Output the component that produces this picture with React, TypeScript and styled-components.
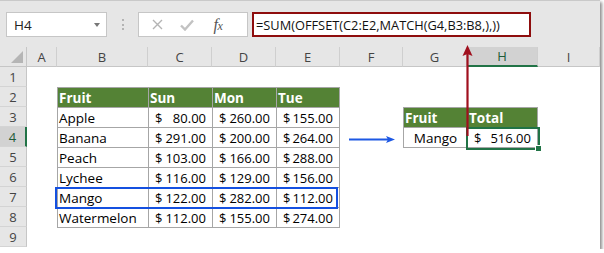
import React from 'react';
import styled, { createGlobalStyle, css } from 'styled-components';

const GlobalStyle = createGlobalStyle`
  body {
    margin: 0;
    background: #fff;
  }
`;

const UI_FONT = `'Open Sans', 'Liberation Sans', sans-serif`;
const CELL_FONT = `'Open Sans', 'Liberation Sans', sans-serif`;
const EXCEL_GREEN = '#217346';
const GRID_LINE = '#a6a6a6';

const COLUMNS = ['A', 'B', 'C', 'D', 'E', 'F', 'G', 'H', 'I'];
const ROWS = [1, 2, 3, 4, 5, 6, 7, 8, 9];
const ACTIVE_COLUMN = 'H';
const ACTIVE_ROW = 4;

type CellKind = 'head' | 'text' | 'centered' | 'money';
type CellSpec = { kind: CellKind; value: string | number };

type Range = { from: string; to: string; top: number; bottom: number };

const fruitSales: [string, number, number, number][] = [
  ['Apple', 80, 260, 155],
  ['Banana', 291, 200, 264],
  ['Peach', 103, 166, 288],
  ['Lychee', 116, 129, 156],
  ['Mango', 122, 282, 112],
  ['Watermelon', 112, 155, 274],
];

const cells: Record<string, CellSpec> = {
  B2: { kind: 'head', value: 'Fruit' },
  C2: { kind: 'head', value: 'Sun' },
  D2: { kind: 'head', value: 'Mon' },
  E2: { kind: 'head', value: 'Tue' },
  G3: { kind: 'head', value: 'Fruit' },
  H3: { kind: 'head', value: 'Total' },
  G4: { kind: 'centered', value: 'Mango' },
  H4: { kind: 'money', value: 516 },
};
fruitSales.forEach(([fruit, sun, mon, tue], i) => {
  const row = i + 3;
  cells[`B${row}`] = { kind: 'text', value: fruit };
  cells[`C${row}`] = { kind: 'money', value: sun };
  cells[`D${row}`] = { kind: 'money', value: mon };
  cells[`E${row}`] = { kind: 'money', value: tue };
});

const tables: Range[] = [
  { from: 'B', to: 'E', top: 2, bottom: 8 },
  { from: 'G', to: 'H', top: 3, bottom: 4 },
];

const findTable = (col: string, row: number) =>
  tables.find(
    (t) =>
      col >= t.from && col <= t.to && row >= t.top && row <= t.bottom,
  );

const Frame = styled.div`
  position: relative;
  width: 600px;
  height: 249px;
  overflow: hidden;
  background: #e6e6e6;
  border-top: 1px solid #c9c9c9;
  box-sizing: border-box;
  box-shadow: 2px 2px 3px rgba(0, 0, 0, 0.45);
`;

const Toolbar = styled.div`
  display: flex;
  align-items: flex-start;
  height: 46px;
  box-sizing: border-box;
  padding: 11px 0 0 6px;
  font-family: ${UI_FONT};
`;

const NameBox = styled.div`
  display: flex;
  align-items: center;
  justify-content: space-between;
  width: 101px;
  height: 25px;
  box-sizing: border-box;
  padding: 0 6px 0 7px;
  background: #fff;
  border: 1px solid #c6c6c6;
  font-size: 13.5px;
  color: #222;
`;

const DropCaret = styled.span`
  width: 0;
  height: 0;
  border-left: 3.5px solid transparent;
  border-right: 3.5px solid transparent;
  border-top: 4px solid #777;
`;

const Grip = styled.div`
  display: flex;
  flex-direction: column;
  align-items: center;
  justify-content: center;
  gap: 2.5px;
  width: 31px;
  height: 25px;

  span {
    width: 2px;
    height: 2px;
    background: #b3b3b3;
  }
`;

const FormulaButtons = styled.div`
  display: flex;
  align-items: center;
  width: 110px;
  height: 25px;
  box-sizing: border-box;
  padding: 0 0 0 13px;
  background: #fff;
  border: 1px solid #c6c6c6;
`;

const BarIcon = styled.span<{ $width: number }>`
  display: inline-flex;
  align-items: center;
  justify-content: center;
  width: ${({ $width }) => $width}px;
`;

const FxLabel = styled.span`
  font-family: 'Liberation Serif', serif;
  font-style: italic;
  font-size: 16px;
  color: #555;
  letter-spacing: -0.5px;

  small {
    font-size: 12px;
  }
`;

const FormulaInput = styled.div`
  display: flex;
  align-items: center;
  margin-left: 4px;
  width: 279px;
  height: 25px;
  box-sizing: border-box;
  padding-left: 2px;
  background: #fff;
  border: 2.5px solid #8e0d0d;
  font-size: 12.8px;
  color: #111;
  white-space: nowrap;
`;

const Sheet = styled.div`
  display: grid;
  grid-template-columns: 27px 30px 91px 64px 64px 64px 63px 64px 71px 62px;
  grid-auto-rows: 20px;
  padding-bottom: 2px;
  background: #fff;
`;

const headerBase = css`
  display: flex;
  align-items: center;
  justify-content: center;
  box-sizing: border-box;
  background: #e6e6e6;
  font-family: ${UI_FONT};
  font-size: 13px;
  color: #444;
`;

const Corner = styled.div`
  ${headerBase};
  position: relative;
  border-right: 1px solid #c6c6c6;
  border-bottom: 1px solid #c6c6c6;

  &::after {
    content: '';
    position: absolute;
    right: 3px;
    bottom: 3px;
    border-left: 12px solid transparent;
    border-bottom: 12px solid #b5b5b5;
  }
`;

const ColumnHeader = styled.div<{ $active: boolean }>`
  ${headerBase};
  border-right: 1px solid #cfcfcf;
  border-bottom: 1px solid #c6c6c6;
  ${({ $active }) =>
    $active &&
    css`
      background: #d2d2d2;
      color: #1d5c38;
      border-bottom: 2px solid ${EXCEL_GREEN};
    `}
`;

const RowHeader = styled.div<{ $active: boolean }>`
  ${headerBase};
  border-right: 1px solid #c6c6c6;
  border-bottom: 1px solid #d4d4d4;
  ${({ $active }) =>
    $active &&
    css`
      background: #d2d2d2;
      color: #1d5c38;
      border-right: 2px solid ${EXCEL_GREEN};
    `}
`;

const Cell = styled.div<{
  $kind?: CellKind;
  $boxed: boolean;
  $lastCol?: boolean;
  $lastRow?: boolean;
}>`
  display: flex;
  align-items: center;
  box-sizing: border-box;
  min-width: 0;
  font-family: ${CELL_FONT};
  font-size: 13.5px;
  color: #000;
  white-space: nowrap;
  padding: 0 1px;

  ${({ $boxed, $lastCol, $lastRow }) =>
    $boxed &&
    css`
      border-left: 1px solid ${GRID_LINE};
      border-top: 1px solid ${GRID_LINE};
      ${$lastCol && `border-right: 1px solid ${GRID_LINE};`}
      ${$lastRow && `box-shadow: 0 1px 0 ${GRID_LINE};`}
    `}

  ${({ $kind }) => {
    switch ($kind) {
      case 'head':
        return css`
          background: #548235;
          color: #fff;
          font-weight: 700;
        `;
      case 'centered':
        return css`
          justify-content: center;
        `;
      case 'money':
        return css`
          justify-content: space-between;
          padding: 0 6px;
          font-size: 13px;
        `;
      default:
        return '';
    }
  }}
`;

const SelectionBox = styled.div<{ $color: string }>`
  position: absolute;
  box-sizing: border-box;
  border: 2px solid ${({ $color }) => $color};
  pointer-events: none;
`;

const FillHandle = styled.span`
  position: absolute;
  right: -4px;
  bottom: -4px;
  width: 5px;
  height: 5px;
  background: ${EXCEL_GREEN};
  border: 1px solid #fff;
`;

const Arrow = styled.svg`
  position: absolute;
  overflow: visible;
`;

const SheetCell: React.FC<{ col: string; row: number }> = ({ col, row }) => {
  const spec = cells[`${col}${row}`];
  const table = findTable(col, row);
  return (
    <Cell
      $kind={spec?.kind}
      $boxed={!!table}
      $lastCol={table?.to === col}
      $lastRow={table?.bottom === row}
    >
      {spec?.kind === 'money' ? (
        <>
          <span>$</span>
          <span>{Number(spec.value).toFixed(2)}</span>
        </>
      ) : (
        spec?.value
      )}
    </Cell>
  );
};

const App: React.FC = () => (
  <>
    <GlobalStyle />
    <Frame>
      <Toolbar>
        <NameBox>
          <span>H4</span>
          <DropCaret />
        </NameBox>
        <Grip>
          <span />
          <span />
          <span />
        </Grip>
        <FormulaButtons>
          <BarIcon $width={11}>
            <svg width="11" height="11" viewBox="0 0 11 11">
              <path d="M1 1 L10 10 M10 1 L1 10" stroke="#b4b4b4" strokeWidth="1.4" />
            </svg>
          </BarIcon>
          <BarIcon $width={48}>
            <svg width="14" height="12" viewBox="0 0 14 12">
              <path d="M1 6.5 L5 10.5 L13 1.5" stroke="#c2c2c2" strokeWidth="2.4" fill="none" />
            </svg>
          </BarIcon>
          <BarIcon $width={14}>
            <FxLabel>
              f<small>x</small>
            </FxLabel>
          </BarIcon>
        </FormulaButtons>
        <FormulaInput>=SUM(OFFSET(C2:E2,MATCH(G4,B3:B8,),))</FormulaInput>
      </Toolbar>

      <Sheet>
        <Corner />
        {COLUMNS.map((col) => (
          <ColumnHeader key={col} $active={col === ACTIVE_COLUMN}>
            {col}
          </ColumnHeader>
        ))}
        {ROWS.map((row) => (
          <React.Fragment key={row}>
            <RowHeader $active={row === ACTIVE_ROW}>{row}</RowHeader>
            {COLUMNS.map((col) => (
              <SheetCell key={col} col={col} row={row} />
            ))}
          </React.Fragment>
        ))}
      </Sheet>

      {/* highlighted Mango row in the source table */}
      <SelectionBox $color="#1450e0" style={{ left: 55, top: 186, width: 283, height: 22 }} />

      {/* active cell H4 */}
      <SelectionBox $color={EXCEL_GREEN} style={{ left: 466, top: 126, width: 74, height: 23 }}>
        <FillHandle />
      </SelectionBox>

      {/* lookup arrow from the source row to the result */}
      <Arrow width="46" height="8" style={{ left: 349, top: 135 }}>
        <path d="M0 3.5 H40" stroke="#1d58e4" strokeWidth="1.8" />
        <path d="M46 3.5 L37 0 L39 3.5 L37 7 Z" fill="#1d58e4" />
      </Arrow>

      {/* arrow from the result up to the formula */}
      <Arrow width="12" height="92" style={{ left: 462, top: 44 }}>
        <path d="M5.5 9 V91" stroke="#a0101e" strokeWidth="2.2" />
        <path d="M5.5 0 L10.5 11 L5.5 9 L0.5 11 Z" fill="#a0101e" />
      </Arrow>
    </Frame>
  </>
);

export default App;
